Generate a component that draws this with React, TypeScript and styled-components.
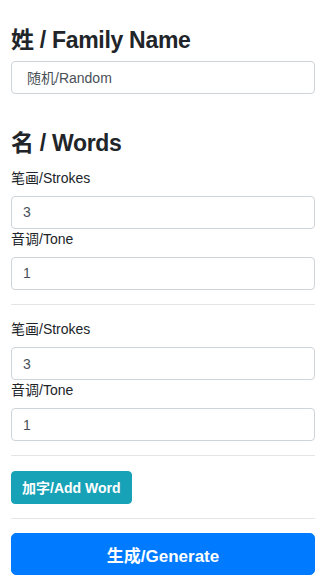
import styled, { createGlobalStyle } from 'styled-components'

const GlobalStyle = createGlobalStyle`
    body {
        margin: 0;
        background: #fff;
        color: #212529;
        font-family: "Liberation Sans", "Noto Sans CJK SC", Arial, sans-serif;
        font-size: 14px;
    }
    * {
        box-sizing: border-box;
    }
`

const words = [
    { strokes: '3', tone: '1' },
    { strokes: '3', tone: '1' },
]

const App = () => {
  return (
    <Page>
        <GlobalStyle />
        <Title>姓 / Family Name</Title>
        <Select defaultValue="random">
            <option value="random">随机/Random</option>
        </Select>

        <Title $spaced>名 / Words</Title>
        {words.map((w, i) => (
            <WordBlock key={i}>
                <Label>笔画/Strokes</Label>
                <Input defaultValue={w.strokes} />
                <Label>音调/Tone</Label>
                <Input defaultValue={w.tone} />
                <Divider />
            </WordBlock>
        ))}

        <Button $variant="info">加字/Add Word</Button>
        <Divider />
        <Button $variant="primary" $block>生成/Generate</Button>
    </Page>
  )
}

const Page = styled.div`
    padding: 26.5px 9px 5px 11px;
    display: flex;
    flex-direction: column;
    align-items: flex-start;
`

const Title = styled.h3<{ $spaced?: boolean }>`
    margin: ${p => (p.$spaced ? '36px' : '0')} 0 ${p => (p.$spaced ? '10px' : '7px')};
    font-size: 23px;
    font-weight: 600;
    letter-spacing: -0.3px;
    line-height: 1.2;
    color: #212529;
`

const Select = styled.select`
    width: 100%;
    height: 33px;
    padding: 0 12px;
    font-family: inherit;
    font-size: 14px;
    color: #495057;
    background: #fff;
    border: 1px solid #ced4da;
    border-radius: 4px;
    appearance: none;
    text-indent: 3px;
`

const WordBlock = styled.div`
    width: 100%;
    display: flex;
    flex-direction: column;
`

const Label = styled.label`
    display: block;
    font-size: 14px;
    line-height: 21px;
    margin-bottom: 7px;
    color: #212529;
`

const Input = styled.input`
    width: 100%;
    height: 33px;
    padding: 5px 11px;
    font-family: inherit;
    font-size: 14px;
    line-height: 21px;
    color: #495057;
    background: #fff;
    border: 1px solid #ced4da;
    border-radius: 4px;
    outline: none;
`

const Divider = styled.hr`
    width: 100%;
    margin: 14px 0 14.5px;
    border: 0;
    border-top: 1px solid rgba(0, 0, 0, 0.1);
`

const Button = styled.button<{ $variant: 'info' | 'primary'; $block?: boolean }>`
    display: inline-flex;
    align-items: center;
    justify-content: center;
    width: ${p => (p.$block ? '100%' : 'auto')};
    height: ${p => (p.$block ? '42px' : '33px')};
    padding: 0 ${p => (p.$block ? '16px' : '10px')};
    font-family: inherit;
    font-size: ${p => (p.$block ? '17px' : '14px')};
    font-weight: 700;
    color: #fff;
    background: ${p => (p.$variant === 'info' ? '#17a2b8' : '#007bff')};
    border: 1px solid ${p => (p.$variant === 'info' ? '#17a2b8' : '#007bff')};
    border-radius: ${p => (p.$block ? '5px' : '4px')};
    cursor: pointer;
`

export default App
